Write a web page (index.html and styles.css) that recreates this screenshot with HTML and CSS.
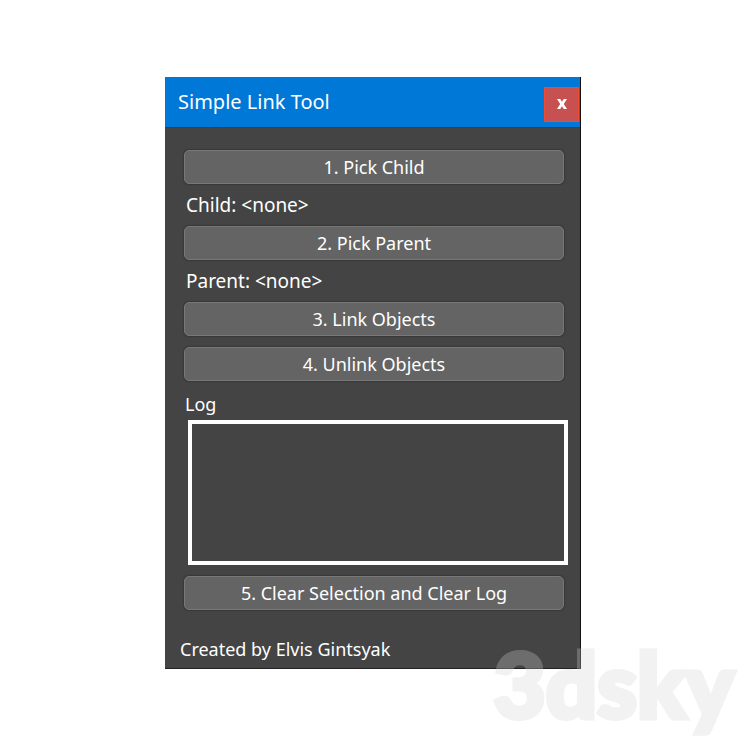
FILE: index.html
```html
<!DOCTYPE html>
<html lang="en">
<head>
  <meta charset="UTF-8" />
  <meta name="viewport" content="width=device-width, initial-scale=1.0"/>
  <title>Simple Link Tool</title>
  <link rel="stylesheet" href="styles.css">
</head>
<body>
  <main class="window">
    <header class="titlebar">
      <h1>Simple Link Tool</h1>
      <button type="button" class="close" aria-label="Close">
        <svg viewBox="0 0 12 12" width="12" height="12"><path d="M1 1h3.2L6 3.8 7.8 1H11L7.8 6 11 11H7.8L6 8.2 4.2 11H1L4.2 6z" fill="#fff"/></svg>
      </button>
    </header>
    <div class="content">
      <button type="button" class="action">1. Pick Child</button>
      <p class="status">Child: &lt;none&gt;</p>
      <button type="button" class="action">2. Pick Parent</button>
      <p class="status">Parent: &lt;none&gt;</p>
      <button type="button" class="action">3. Link Objects</button>
      <button type="button" class="action second">4. Unlink Objects</button>
      <label class="log-label" for="log">Log</label>
      <textarea id="log" class="log" readonly></textarea>
      <button type="button" class="action">5. Clear Selection and Clear Log</button>
    </div>
    <footer class="credit">Created by Elvis Gintsyak</footer>
  </main>
  <div class="watermark">3dsky</div>
</body>
</html>
```
FILE: styles.css
```css
* {
  box-sizing: border-box;
}
body {
  position: relative;
  min-height: 100vh;
  margin: 0;
  padding: 77px 20px 20px;
  background-color: #fff;
  color: #fff;
  font-family: "Noto Sans", Tahoma, sans-serif;
  font-size: 18px;
  line-height: 26px;
}
.window {
  max-width: 416px;
  margin: 0 auto;
  background-color: #444;
  border-right: 1px solid #111;
  border-bottom: 1px solid #222;
}
.titlebar {
  display: flex;
  align-items: center;
  justify-content: space-between;
  height: 51px;
  padding: 0 1px 0 13px;
  background-color: #0078d7;
  border-bottom: 1px solid #6b2a20;
}
.titlebar h1 {
  margin: 0;
  font-size: 20px;
  font-weight: normal;
}
.close {
  display: flex;
  align-items: center;
  justify-content: center;
  width: 35px;
  height: 35px;
  margin-top: 4px;
  padding: 0;
  background-color: #c75050;
  border: 1px solid #f04a30;
}
.content {
  display: flex;
  flex-direction: column;
  padding: 22px 16px 0 19px;
}
.action {
  height: 34px;
  padding: 0;
  background-color: #646464;
  border: 1px solid #787878;
  border-radius: 5px;
  box-shadow: 0 0 1px 1px #383838;
  color: #fff;
  font: inherit;
  line-height: 32px;
}
.second {
  margin-top: 11px;
}
.status {
  margin: 0;
  padding: 8px 2px;
  font-size: 19px;
}
.log-label {
  padding: 10px 1px 3px;
}
.log {
  height: 145px;
  margin: 0 -4px 11px 4px;
  padding: 4px;
  background-color: #444;
  border: 4px solid #fff;
  border-radius: 0;
  outline: none;
  color: #fff;
  font: inherit;
  resize: none;
}
.credit {
  padding: 26px 15px 6px;
}
.watermark {
  position: absolute;
  right: 12px;
  bottom: 18px;
  color: #d3d3d3;
  font-family: Lato, sans-serif;
  font-size: 90px;
  font-weight: 900;
  line-height: 90px;
  opacity: 0.29;
  pointer-events: none;
  -webkit-text-stroke: 5px #d3d3d3;
}
```
